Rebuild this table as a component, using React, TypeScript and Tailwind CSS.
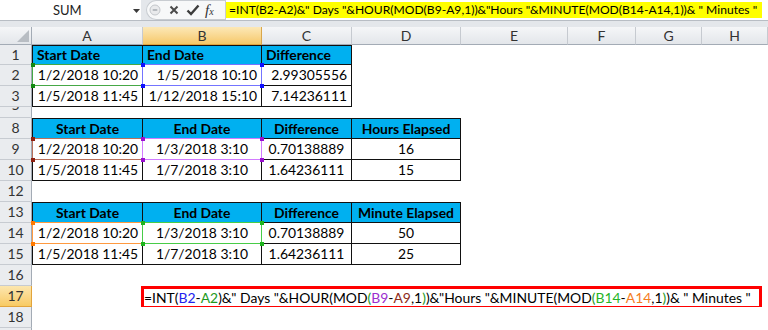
import React from 'react';

type Hl = { line: string; dot: string };
type C = { t?: React.ReactNode; h?: boolean; al?: 'l' | 'r' | 'c'; hl?: Hl };

const GREEN: Hl = { line: 'border-[#46a846]', dot: 'bg-[#138a13]' };
const BLUE: Hl = { line: 'border-[#7474ff]', dot: 'bg-[#1010ff]' };
const BROWN: Hl = { line: 'border-[#b8705c]', dot: 'bg-[#8e1f10]' };
const PURPLE: Hl = { line: 'border-[#d27bff]', dot: 'bg-[#9a10d0]' };
const ORANGE: Hl = { line: 'border-[#ff9a40]', dot: 'bg-[#ff7a00]' };
const LGREEN: Hl = { line: 'border-[#48cc48]', dot: 'bg-[#1fb41f]' };

function Highlight({ hl }: { hl: Hl }) {
  return (
    <div className={`pointer-events-none absolute -left-px -top-px -right-px -bottom-px z-10 border ${hl.line}`}>
      <div className={`absolute -left-[2.5px] -top-[2.5px] h-[4px] w-[4px] ${hl.dot}`} />
      <div className={`absolute -right-[2.5px] -top-[2.5px] h-[4px] w-[4px] ${hl.dot}`} />
      <div className={`absolute -left-[2.5px] -bottom-[2.5px] h-[4px] w-[4px] ${hl.dot}`} />
      <div className={`absolute -right-[2.5px] -bottom-[2.5px] h-[4px] w-[4px] ${hl.dot}`} />
    </div>
  );
}

function TCell({ c, first, top }: { c: C; first: boolean; top: boolean }) {
  const bg = c.h ? 'bg-[#00b0f0] font-bold' : 'bg-white';
  const al =
    c.al === 'l' ? 'justify-start pl-[4px]' : c.al === 'r' ? 'justify-end pr-[4px]' : 'justify-center';
  return (
    <div
      className={`relative flex items-center whitespace-nowrap border-r border-b border-[#111] text-[13.9px] leading-none text-black ${bg} ${al} ${
        first ? 'border-l' : ''
      } ${top ? 'border-t' : ''}`}
    >
      {c.t}
      {c.hl && <Highlight hl={c.hl} />}
    </div>
  );
}

function Empty() {
  return <div className="bg-white" />;
}

function RowHead({ n, sel, clip }: { n: string; sel?: boolean; clip?: boolean }) {
  return (
    <div
      className={`flex justify-center overflow-hidden border-r border-b text-[14px] text-[#333] ${
        clip ? 'items-start' : 'items-center'
      } ${
        sel
          ? 'bg-linear-to-b from-[#fce6ae] to-[#f8ca62] border-[#e2a43c]'
          : 'bg-[#eaecef] border-r-[#a3abb5] border-b-[#c7cbd1]'
      }`}
    >
      <span className={clip ? 'leading-none -mt-[9px]' : 'leading-none'}>{n}</span>
    </div>
  );
}

type Row = { n: string; cells?: C[]; top?: boolean; clip?: boolean; sel?: boolean; formula?: boolean };

const t = (s: string, al: 'l' | 'r' | 'c', hl?: Hl): C => ({ t: s, al, hl });
const hd = (s: string, al: 'l' | 'c'): C => ({ t: s, al, h: true });

const rows: Row[] = [
  { n: '1', top: true, cells: [hd('Start Date', 'l'), hd('End Date', 'l'), hd('Difference', 'l')] },
  { n: '2', cells: [t('1/2/2018 10:20', 'r', GREEN), t('1/5/2018 10:10', 'r', BLUE), t('2.99305556', 'r')] },
  { n: '3', cells: [t('1/5/2018 11:45', 'r'), t('1/12/2018 15:10', 'r'), t('7.14236111', 'r')] },
  { n: '5', clip: true },
  {
    n: '8',
    top: true,
    cells: [hd('Start Date', 'c'), hd('End Date', 'c'), hd('Difference', 'c'), hd('Hours Elapsed', 'c')],
  },
  {
    n: '9',
    cells: [t('1/2/2018 10:20', 'r', BROWN), t('1/3/2018 3:10', 'c', PURPLE), t('0.70138889', 'c'), t('16', 'c')],
  },
  { n: '10', cells: [t('1/5/2018 11:45', 'r'), t('1/7/2018 3:10', 'c'), t('1.64236111', 'c'), t('15', 'c')] },
  { n: '12' },
  {
    n: '13',
    top: true,
    cells: [hd('Start Date', 'c'), hd('End Date', 'c'), hd('Difference', 'c'), hd('Minute Elapsed', 'c')],
  },
  {
    n: '14',
    cells: [t('1/2/2018 10:20', 'r', ORANGE), t('1/3/2018 3:10', 'c', LGREEN), t('0.70138889', 'c'), t('50', 'c')],
  },
  { n: '15', cells: [t('1/5/2018 11:45', 'r'), t('1/7/2018 3:10', 'c'), t('1.64236111', 'c'), t('25', 'c')] },
  { n: '16' },
  { n: '17', sel: true, formula: true },
  { n: '18' },
  { n: '19' },
];

const COLS = ['A', 'B', 'C', 'D', 'E', 'F', 'G', 'H'];

function FormulaText({ colored }: { colored: boolean }) {
  const c = (cls: string, s: string) => (colored ? <span className={cls}>{s}</span> : s);
  return (
    <>
      =INT({c('text-[#2222ee]', 'B2')}-{c('text-[#1e9a1e]', 'A2')})&amp;" Days "&amp;HOUR(MOD
      {c('text-[#1e9a1e]', '(')}
      {c('text-[#9b2fd0]', 'B9')}-{c('text-[#8e2a18]', 'A9')},1{c('text-[#1e9a1e]', ')')})&amp;"Hours
      "&amp;MINUTE(MOD{c('text-[#1e9a1e]', '(')}
      {c('text-[#26b426]', 'B14')}-{c('text-[#f57d1f]', 'A14')},1{c('text-[#1e9a1e]', ')')})&amp; " Minutes "
    </>
  );
}

function FormulaBar() {
  return (
    <div className="h-[27px] bg-[#e4e7eb]">
      <div className="flex h-[21px] border-b border-[#b8bdc4]">
        <div className="relative flex w-[141px] shrink-0 items-center bg-white">
          <span className="ml-[53px] text-[13px] leading-none text-[#222]">SUM</span>
          <svg className="absolute left-[133px] top-[9px]" width="7" height="4" viewBox="0 0 7 4">
            <path d="M0 0H7L3.5 4Z" fill="#3a3a3a" />
          </svg>
        </div>
        <div className="w-[5px] shrink-0" />
        <div className="flex w-[79px] shrink-0 items-center rounded-l-[10px] border border-r-0 border-[#c8ccd1] bg-[#f7f8f9]">
          <svg className="ml-[2px]" width="12" height="12" viewBox="0 0 12 12">
            <circle cx="6" cy="6" r="5" fill="#e9eaec" stroke="#c3c6ca" />
            <rect x="3.5" y="5" width="5" height="2" rx="1" fill="#b5b9be" />
          </svg>
          <svg className="ml-[8px]" width="10" height="10" viewBox="0 0 10 10">
            <path d="M1.5 1.5L8.5 8.5M8.5 1.5L1.5 8.5" stroke="#4a4a4a" strokeWidth="2" />
          </svg>
          <svg className="ml-[7px]" width="14" height="12" viewBox="0 0 14 12">
            <path d="M1.5 6.5L5 10L12.5 1.5" stroke="#3c3c3c" strokeWidth="2.4" fill="none" />
          </svg>
          <span className="ml-[5px] font-['Liberation_Serif',serif] text-[15px] italic leading-none text-[#333]">
            f<span className="text-[10px]">x</span>
          </span>
        </div>
        <div className="flex min-w-0 flex-1 items-stretch border-l border-[#c8ccd1] bg-white py-[2px] pr-[6px]">
          <div className="flex min-w-0 flex-1 items-center overflow-hidden whitespace-nowrap bg-[#ffff00] pl-[3px] text-[12.1px] leading-none text-black">
            <FormulaText colored={false} />
          </div>
        </div>
      </div>
    </div>
  );
}

function Sheet() {
  return (
    <div className="grid grid-cols-[32px_111px_119px_90px_109px_107px_68px_66px_1fr] grid-rows-[18px_20px_21px_21px_11px_21px_21px_21px_21px_21px_21px_21px_21px_21px_21px_21px]">
      <div className="relative border-r border-b border-[#a3abb5] bg-linear-to-b from-[#f5f6f8] to-[#e3e6ea]">
        <svg className="absolute right-[2px] bottom-[2px]" width="12" height="12" viewBox="0 0 12 12">
          <path d="M12 0V12H0Z" fill="#b8bdc3" />
        </svg>
      </div>
      {COLS.map((c) => (
        <div
          key={c}
          className={`flex items-center justify-center border-r border-b text-[14px] leading-none text-[#333] ${
            c === 'B'
              ? 'bg-linear-to-b from-[#fce8b6] to-[#f6c868] border-r-[#d9a64a] border-b-[#e2a43c]'
              : 'bg-linear-to-b from-[#f5f6f8] to-[#e3e6ea] border-r-[#c6cad0] border-b-[#a3abb5]'
          }`}
        >
          {c}
        </div>
      ))}
      {rows.map((r) => (
        <React.Fragment key={r.n}>
          <RowHead n={r.n} sel={r.sel} clip={r.clip} />
          {r.formula ? (
            <>
              <Empty />
              <div className="col-span-7 -ml-[2px] mr-[6px] flex h-[23px] items-center overflow-hidden whitespace-nowrap border-[3px] border-[#ff0000] bg-white text-[13.9px] leading-none text-black">
                <FormulaText colored />
              </div>
            </>
          ) : (
            COLS.map((col, i) => {
              const cell = r.cells && r.cells[i];
              if (!cell) return <Empty key={col} />;
              return <TCell key={col} c={cell} first={i === 0} top={!!r.top} />;
            })
          )}
        </React.Fragment>
      ))}
    </div>
  );
}

export default function App() {
  return (
    <div className="h-[330px] w-[768px] overflow-hidden bg-white font-[Lato,'Liberation_Sans',sans-serif]">
      <FormulaBar />
      <Sheet />
    </div>
  );
}
